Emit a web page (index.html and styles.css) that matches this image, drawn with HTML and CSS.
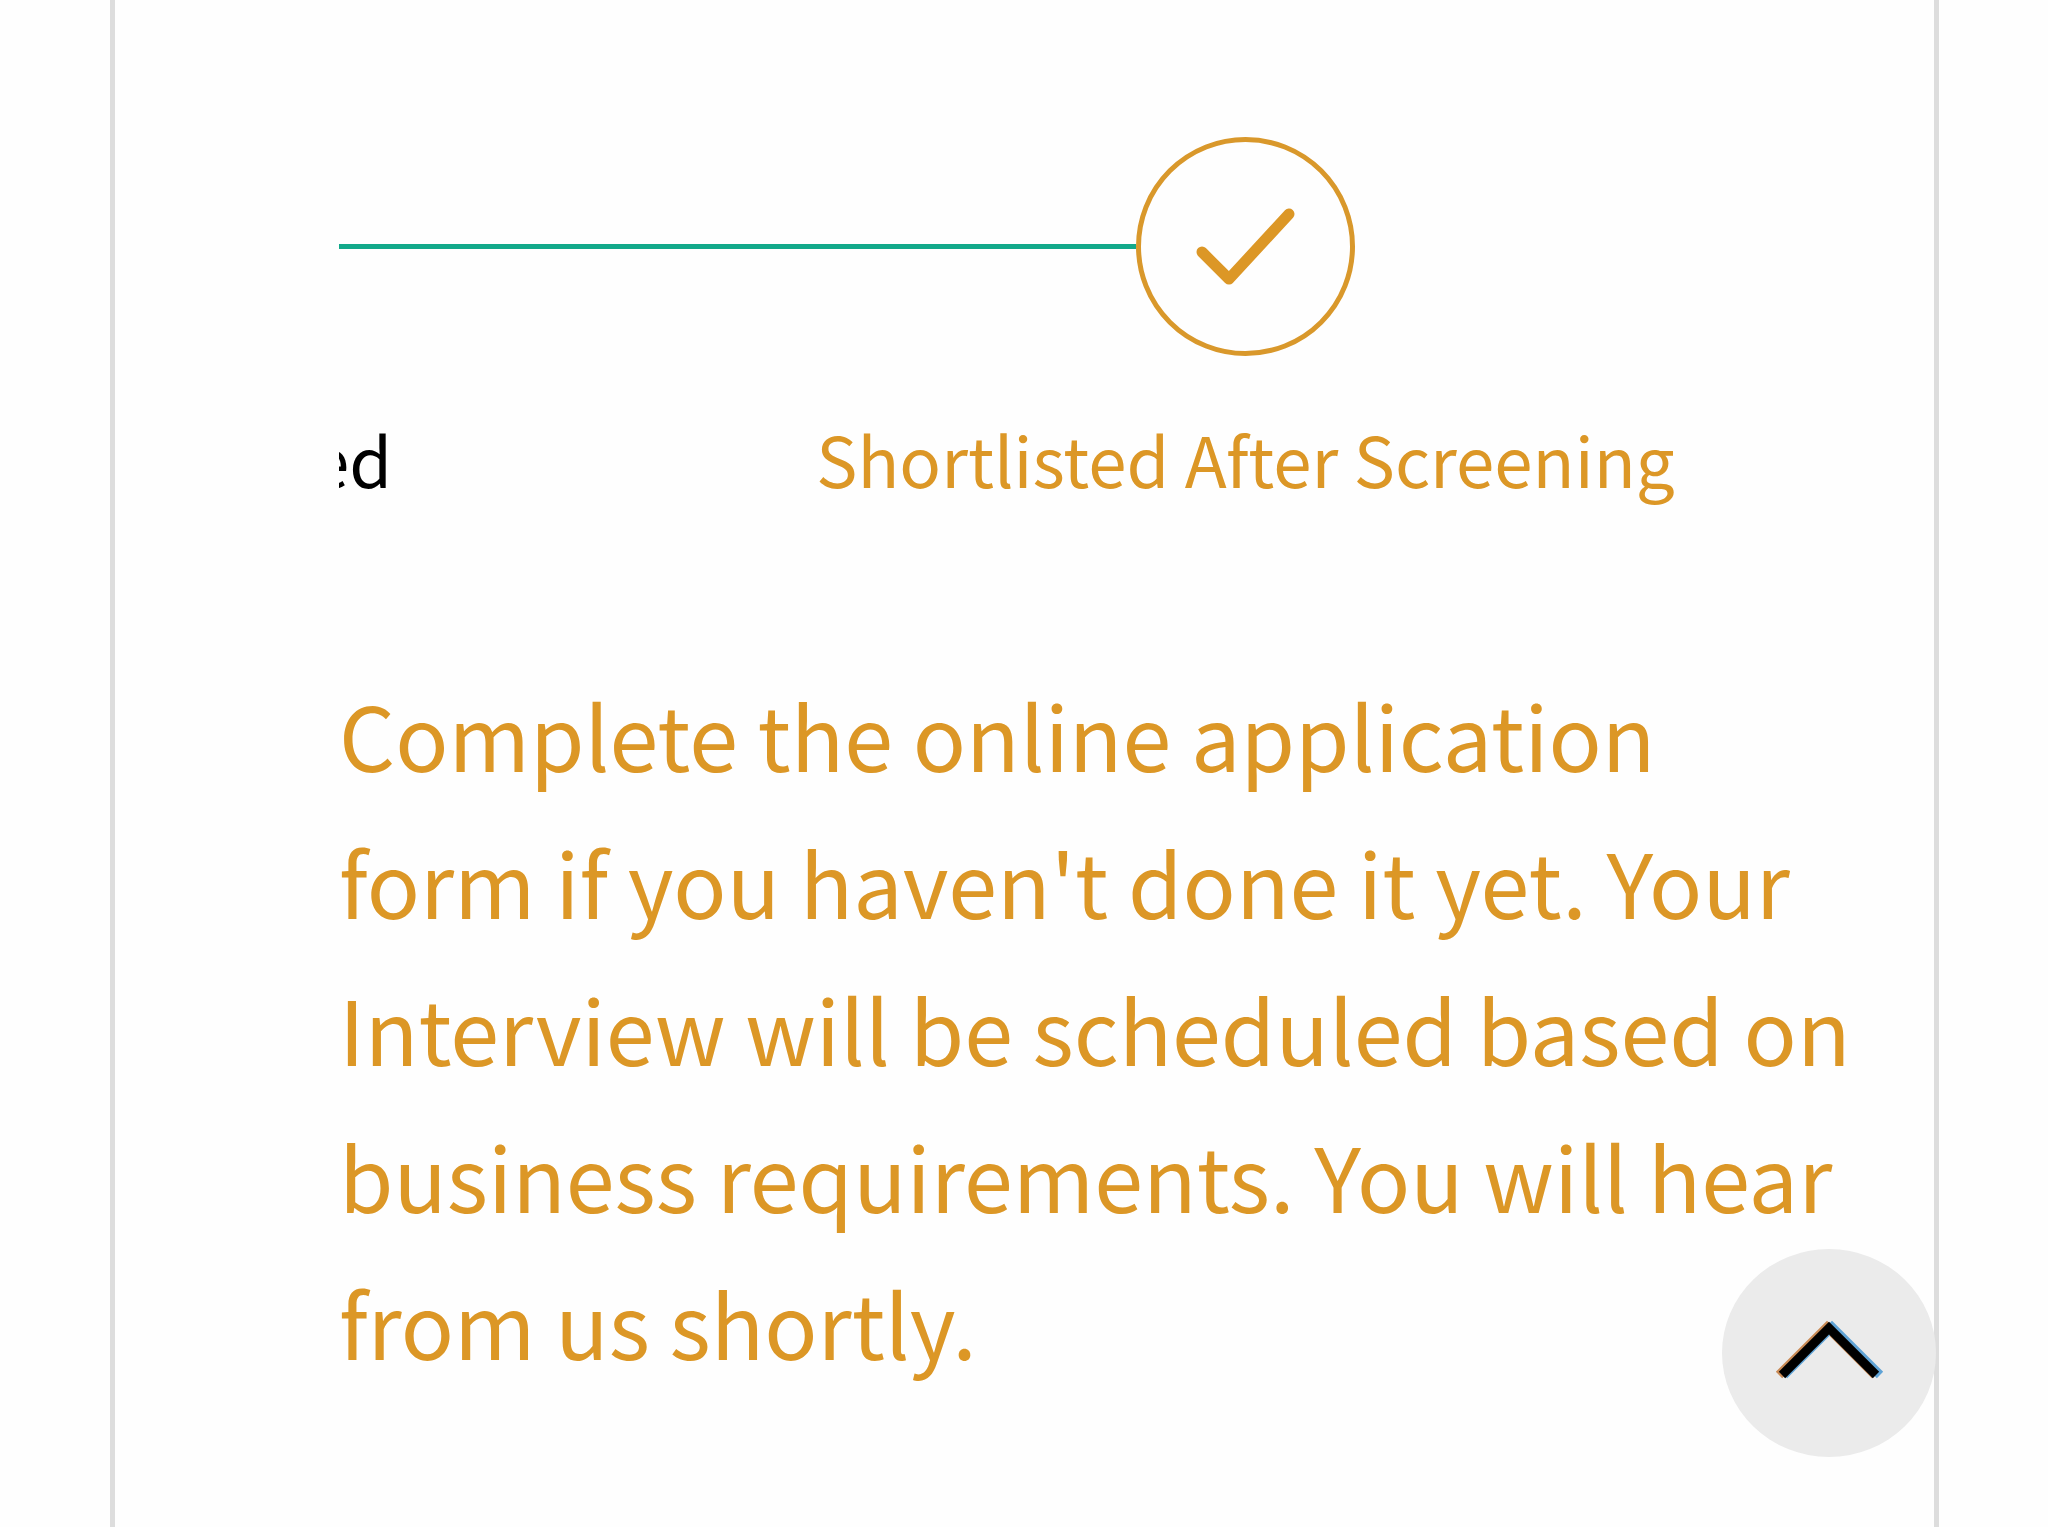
FILE: index.html
```html
<!DOCTYPE html>
<html lang="en">
<head>
    <meta charset="UTF-8">
    <meta name="viewport" content="width=device-width, initial-scale=1.0">
    <title>Application Status</title>
    <link rel="stylesheet" href="styles.css">
</head>
<body>
    <main class="card">
        <!-- Progress steps -->
        <ol class="timeline">
            <li class="step step-done">
                <div class="track">
                    <span class="line"></span>
                </div>
                <div class="label">ed</div>
            </li>
            <li class="step step-current">
                <div class="track">
                    <span class="line"></span>
                    <span class="circle">
                        <svg viewBox="0 0 219 219" aria-hidden="true">
                            <path d="M66 115 L93 142 L153 77"/>
                        </svg>
                    </span>
                    <span class="rest"></span>
                </div>
                <div class="label">Shortlisted After Screening</div>
            </li>
        </ol>

        <!-- Status message -->
        <p class="message">Complete the online application<br>
            form if you haven't done it yet. Your<br>
            Interview will be scheduled based on<br>
            business requirements. You will hear<br>
            from us shortly.</p>
    </main>

    <button type="button" class="to-top" id="toTop" aria-label="Back to top">
        <svg viewBox="0 0 214 208" aria-hidden="true">
            <path class="fringe-warm" d="M57 126 L105 78 L153 126"/>
            <path class="fringe-cool" d="M62 126 L110 78 L158 126"/>
            <path class="arrow" d="M60 126 L107 79 L154 126"/>
        </svg>
    </button>

    <script>
        document.getElementById('toTop').addEventListener('click', () => {
            window.scrollTo({ top: 0, behavior: 'smooth' });
        });
    </script>
</body>
</html>
```
FILE: styles.css
```css
* {
    box-sizing: border-box;
}
body {
    margin: 0;
    font-family: "Noto Sans CJK SC", "Open Sans", sans-serif;
    background-color: #fefefe;
    color: #000;
}
.card {
    min-height: 100vh;
    margin: 0 109px 0 110px;
    padding: 137px 79px 80px 224px;
    border-left: 5px solid #ddd;
    border-right: 5px solid #ddd;
}
.timeline {
    display: grid;
    grid-template-columns: 297px 1fr;
    margin: 0;
    padding: 0;
    list-style: none;
}
.track {
    display: flex;
    align-items: center;
    height: 219px;
}
.line {
    flex: 1;
    height: 5px;
    background-color: #12a98a;
}
.rest {
    flex: 1;
}
.circle {
    width: 219px;
    height: 219px;
    border: 5px solid #d9982b;
    border-radius: 50%;
}
.circle svg {
    display: block;
    margin: -5px;
    width: 219px;
    height: 219px;
    fill: none;
    stroke: #dc9726;
    stroke-width: 11;
    stroke-linecap: round;
    stroke-linejoin: round;
}
.label {
    margin-top: 52px;
    font-size: 69px;
    line-height: 100px;
    white-space: nowrap;
}
/* the finished step is scrolled out on the left */
.step-done .label {
    display: flex;
    justify-content: flex-end;
    width: 53px;
    overflow: hidden;
}
.step-current .label {
    color: #dc9726;
    text-align: center;
}
.message {
    margin: 152px 0 0;
    color: #dc9726;
    font-size: 88px;
    line-height: 147px;
    white-space: nowrap;
}
.to-top {
    position: fixed;
    right: 112px;
    bottom: 70px;
    width: 214px;
    height: 208px;
    padding: 0;
    border: none;
    border-radius: 50%;
    background-color: #ebebeb;
    cursor: pointer;
}
.to-top svg {
    display: block;
    width: 100%;
    height: 100%;
    fill: none;
    stroke-width: 9;
}
.fringe-warm {
    stroke: #c98a55;
}
.fringe-cool {
    stroke: #5fa3d6;
}
.arrow {
    stroke: #000;
}
```
